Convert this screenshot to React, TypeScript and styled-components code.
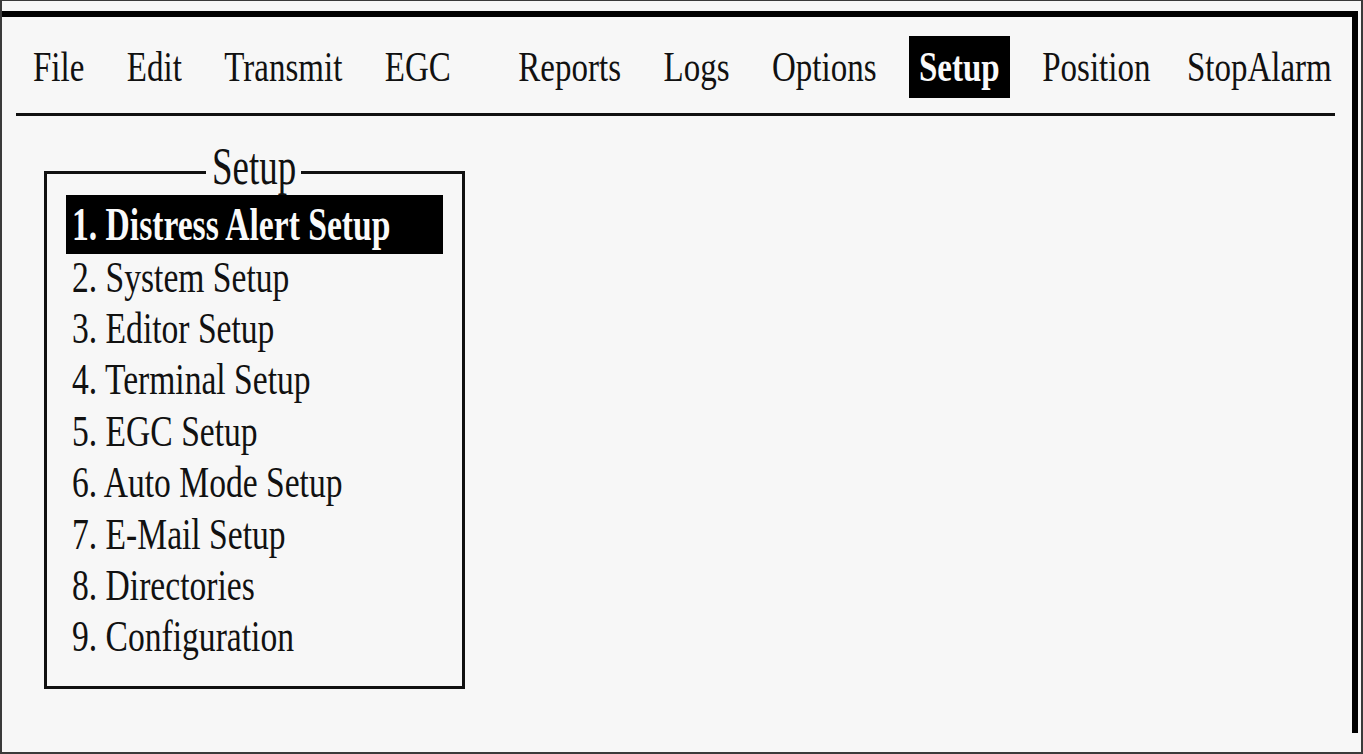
import styled, { createGlobalStyle } from 'styled-components';

const GlobalStyle = createGlobalStyle`
  html, body {
    margin: 0;
    padding: 0;
    background: #f7f7f7;
  }
  body {
    font-family: "Liberation Serif", "Times New Roman", serif;
    color: #111;
  }
`;

const Frame = styled.div`
  width: 1363px;
  height: 754px;
  box-sizing: border-box;
  border: 2px solid #3a3a3a;
  border-top-width: 1px;
  background: #f7f7f7;
  padding: 10px 3px 18px 0;
`;

const Screen = styled.div`
  height: 722px;
  box-sizing: border-box;
  border-top: 6px solid #000;
  border-right: 6px solid #000;
`;

const MenuBar = styled.nav`
  display: flex;
  align-items: center;
  gap: 22.5px;
  padding: 19px 0 0 21px;
`;

// $after: extra space after the item, $before: pull the item closer to the previous one
const MenuItem = styled.div<{ $active?: boolean; $after?: number; $before?: number }>`
  height: 62px;
  display: flex;
  align-items: center;
  padding: 0 10px;
  font-size: 33px;
  white-space: nowrap;
  font-weight: ${({ $active }) => ($active ? 700 : 400)};
  color: ${({ $active }) => ($active ? '#fafafa' : '#111')};
  background: ${({ $active }) => ($active ? '#000' : 'transparent')};
  margin-right: ${({ $after = 0 }) => $after}px;
  margin-left: ${({ $before = 0 }) => -$before}px;
`;

const Stretch = styled.span<{ $y: number }>`
  display: inline-block;
  transform: scaleY(${({ $y }) => $y});
  transform-origin: 50% 50%;
`;

const Rule = styled.div`
  margin: 15px 0 0 14px;
  width: 1319px;
  height: 3px;
  background: #111;
`;

const SetupBox = styled.fieldset`
  width: 421px;
  box-sizing: border-box;
  margin: 33px 0 0 42px;
  padding: 0 19px 21px;
  border: 3px solid #111;
  min-inline-size: 0;
`;

const Title = styled.legend`
  margin-left: 140px;
  padding: 0 5px 10px 6px;
  font-size: 37px;
  line-height: 36px;
`;

const OptionList = styled.ol`
  list-style: none;
  margin: 0;
  padding: 0;
`;

const Option = styled.li<{ $selected?: boolean }>`
  box-sizing: border-box;
  height: ${({ $selected }) => ($selected ? '59px' : '51.4px')};
  display: flex;
  align-items: center;
  padding: ${({ $selected }) => ($selected ? '0 0 0 6px' : '0 0 6px 6px')};
  font-size: 33.6px;
  white-space: nowrap;
  font-weight: ${({ $selected }) => ($selected ? 700 : 400)};
  color: ${({ $selected }) => ($selected ? '#fafafa' : '#111')};
  background: ${({ $selected }) => ($selected ? '#000' : 'transparent')};
`;

const menu = ['File', 'Edit', 'Transmit', 'EGC', 'Reports', 'Logs', 'Options', 'Setup', 'Position', 'StopAlarm'];

const options = [
  '1. Distress Alert Setup',
  '2. System Setup',
  '3. Editor Setup',
  '4. Terminal Setup',
  '5. EGC Setup',
  '6. Auto Mode Setup',
  '7. E-Mail Setup',
  '8. Directories',
  '9. Configuration',
];

export default function App() {
  return (
    <>
      <GlobalStyle />
      <Frame>
        <Screen>
          <MenuBar>
            {menu.map((m) => (
              <MenuItem
                key={m}
                $active={m === 'Setup'}
                $after={m === 'EGC' ? 25 : 0}
                $before={m === 'StopAlarm' ? 6 : 0}
              >
                <Stretch $y={1.28}>{m}</Stretch>
              </MenuItem>
            ))}
          </MenuBar>
          <Rule />
          <SetupBox>
            <Title>
              <Stretch $y={1.42}>Setup</Stretch>
            </Title>
            <OptionList>
              {options.map((o, i) => (
                <Option key={o} $selected={i === 0}>
                  <Stretch $y={i === 0 ? 1.4 : 1.32}>{o}</Stretch>
                </Option>
              ))}
            </OptionList>
          </SetupBox>
        </Screen>
      </Frame>
    </>
  );
}
